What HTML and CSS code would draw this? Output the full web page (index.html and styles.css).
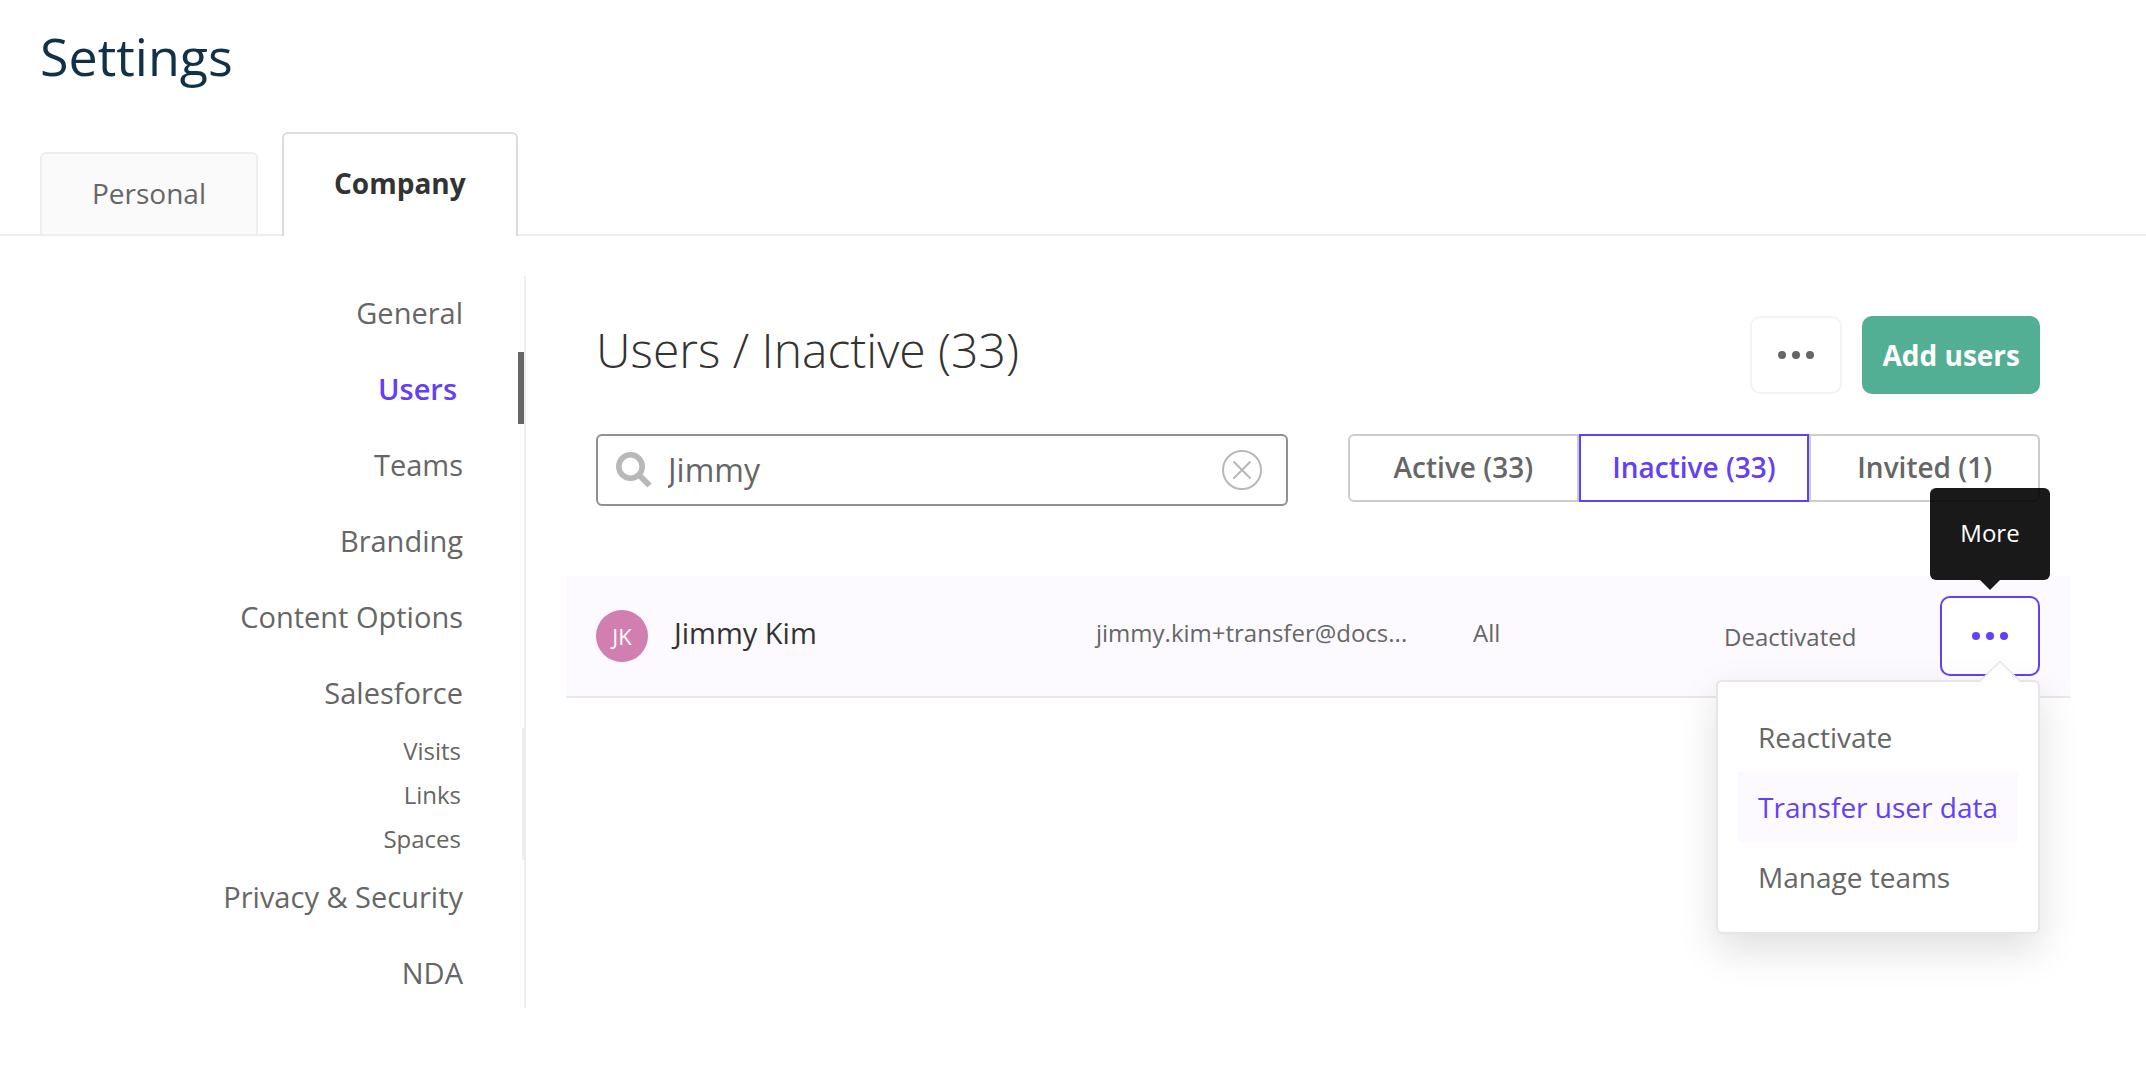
FILE: index.html
```html
<!DOCTYPE html>
<html lang="en">
<head>
    <meta charset="UTF-8">
    <meta name="viewport" content="width=device-width, initial-scale=1.0">
    <title>Settings</title>
    <link rel="stylesheet" href="styles.css">
</head>
<body>
    <header class="page-header">
        <h1>Settings</h1>
        <nav class="tabs">
            <a class="tab" href="#personal">Personal</a>
            <a class="tab active" href="#company">Company</a>
        </nav>
    </header>

    <div class="layout">
        <nav class="sidebar">
            <a class="side-link" href="#general">General</a>
            <a class="side-link active" href="#users">Users</a>
            <a class="side-link" href="#teams">Teams</a>
            <a class="side-link" href="#branding">Branding</a>
            <a class="side-link" href="#content">Content Options</a>
            <a class="side-link" href="#salesforce">Salesforce</a>
            <div class="sub-links">
                <a href="#visits">Visits</a>
                <a href="#links">Links</a>
                <a href="#spaces">Spaces</a>
            </div>
            <a class="side-link" href="#privacy">Privacy &amp; Security</a>
            <a class="side-link" href="#nda">NDA</a>
        </nav>

        <main>
            <div class="main-head">
                <h2>Users / Inactive (33)</h2>
                <button type="button" class="more-btn" aria-label="More options">
                    <svg width="36" height="8" viewBox="0 0 36 8"><circle cx="4" cy="4" r="4"/><circle cx="18" cy="4" r="4"/><circle cx="32" cy="4" r="4"/></svg>
                </button>
                <button type="button" class="add-btn">Add users</button>
            </div>

            <div class="filters">
                <div class="search">
                    <svg width="36" height="36" viewBox="0 0 36 36"><circle cx="14.5" cy="14.5" r="11.7" fill="none" stroke="#b8b8b8" stroke-width="5.6"/><path d="M23 23L33.5 33.5" stroke="#b8b8b8" stroke-width="6"/></svg>
                    <input type="text" value="Jimmy" aria-label="Search users">
                    <button type="button" class="clear-btn" aria-label="Clear search">
                        <svg width="40" height="40" viewBox="0 0 40 40"><circle cx="20" cy="20" r="19"/><path d="M12 12L28 28M28 12L12 28"/></svg>
                    </button>
                </div>
                <div class="segments">
                    <button type="button">Active (33)</button>
                    <button type="button" class="active">Inactive (33)</button>
                    <button type="button">Invited (1)</button>
                </div>
            </div>

            <table class="users">
                <tbody>
                    <tr>
                        <td class="col-name">
                            <div class="user">
                                <span class="avatar">JK</span>
                                <span class="name">Jimmy Kim</span>
                            </div>
                        </td>
                        <td class="col-email">jimmy.kim+transfer@docs...</td>
                        <td class="col-team">All</td>
                        <td class="col-status">Deactivated</td>
                        <td class="col-actions">
                            <div class="row-actions">
                                <button type="button" class="row-more" aria-label="More">
                                    <svg width="36" height="8" viewBox="0 0 36 8"><circle cx="4" cy="4" r="4"/><circle cx="18" cy="4" r="4"/><circle cx="32" cy="4" r="4"/></svg>
                                </button>
                                <div class="tooltip">More</div>
                                <div class="menu">
                                    <svg class="menu-arrow" width="44" height="22" viewBox="0 0 44 22"><path d="M2 21L22 1L42 21V22H2Z" fill="#fff"/><path d="M1 21L22 0.5L43 21" fill="none" stroke="#e6e6e6" stroke-width="1.5"/></svg>
                                    <button type="button">Reactivate</button>
                                    <button type="button" class="active">Transfer user data</button>
                                    <button type="button">Manage teams</button>
                                </div>
                            </div>
                        </td>
                    </tr>
                </tbody>
            </table>
        </main>
    </div>
</body>
</html>
```
FILE: styles.css
```css
* {
    box-sizing: border-box;
}
body {
    margin: 0;
    font-family: "Open Sans", sans-serif;
    font-size: 28px;
    color: #666;
    background-color: #fff;
}
a {
    color: inherit;
    text-decoration: none;
}
button, input {
    font-family: inherit;
    font-size: inherit;
    color: inherit;
}
button {
    padding: 0;
    border: none;
    background: none;
    cursor: pointer;
}
svg {
    display: block;
}
h1 {
    margin: 0 0 46px;
    font-size: 52px;
    font-weight: 400;
    line-height: 60px;
    color: #103148;
}
.page-header {
    padding: 26px 40px 0;
    border-bottom: 2px solid #eee;
}
.tabs {
    display: flex;
    align-items: flex-end;
    gap: 24px;
}
.tab {
    padding: 0 50px 2px;
    line-height: 78px;
    border: 2px solid #eee;
    border-bottom: none;
    border-radius: 6px 6px 0 0;
    background-color: #fafafa;
}
.tab.active {
    margin-bottom: -2px;
    padding-bottom: 4px;
    line-height: 98px;
    border-color: #ddd;
    background-color: #fff;
    font-weight: 700;
    color: #333;
}
.layout {
    display: flex;
    align-items: flex-start;
    padding: 40px 76px 64px 0;
}
.sidebar {
    flex: 0 0 526px;
    display: flex;
    flex-direction: column;
    gap: 4px;
    border-right: 2px solid #eee;
    text-align: right;
}
.side-link {
    padding: 2px 61px 0 0;
    font-size: 29px;
    line-height: 70px;
}
.side-link.active {
    border-right: 6px solid #666;
    font-weight: 600;
    color: #6440f5;
}
.sub-links {
    display: flex;
    flex-direction: column;
    margin: -4px 0;
    padding-right: 61px;
    border-right: 2px solid #eee;
    font-size: 24px;
    line-height: 42px;
}
.sub-links a {
    padding-top: 2px;
}
main {
    flex: 1;
    min-width: 0;
    margin-left: 40px;
    padding-top: 40px;
}
.main-head {
    display: flex;
    align-items: flex-start;
    gap: 20px;
    padding: 0 30px;
}
h2 {
    flex: 1;
    margin: 0;
    font-size: 48px;
    font-weight: 300;
    line-height: 68px;
    color: #333;
}
.more-btn, .row-more {
    display: flex;
    align-items: center;
    justify-content: center;
    border-radius: 10px;
    background-color: #fff;
}
.more-btn {
    width: 92px;
    height: 78px;
    border: 2px solid #f3f3f3;
    fill: #666;
}
.add-btn {
    height: 78px;
    padding: 0 20px;
    border-radius: 10px;
    background-color: #52af94;
    font-weight: 700;
    color: #fff;
}
.filters {
    display: grid;
    grid-template-columns: 1fr 1fr;
    align-items: start;
    gap: 60px;
    margin: 40px 0 70px;
    padding: 0 30px;
}
.search {
    display: flex;
    align-items: center;
    gap: 16px;
    height: 72px;
    padding: 0 24px 0 18px;
    border: 2px solid #8f8f95;
    border-radius: 6px;
}
.search input {
    flex: 1;
    min-width: 0;
    height: 64px;
    padding: 0 0 2px;
    border: none;
    outline: none;
    background: none;
    font-size: 32px;
}
.clear-btn svg {
    fill: none;
    stroke: #b8b8b8;
    stroke-width: 2;
    stroke-linecap: round;
}
.segments {
    display: flex;
}
.segments button {
    flex: 1;
    height: 68px;
    padding-bottom: 2px;
    border: 2px solid #ccc;
    font-weight: 600;
}
.segments button:first-child {
    border-radius: 6px 0 0 6px;
}
.segments button:last-child {
    border-radius: 0 6px 6px 0;
}
.segments button.active {
    border-color: #6440f5;
    color: #6440f5;
}
.users {
    width: 100%;
    table-layout: fixed;
    border-collapse: separate;
    border-spacing: 0;
}
.users td {
    height: 122px;
    padding: 0;
    border-bottom: 2px solid #e8e8e8;
    background-color: #fcfaff;
    font-size: 24px;
    vertical-align: middle;
}
.users .col-name {
    padding-left: 30px;
}
.users .col-email {
    width: 377px;
    padding-bottom: 8px;
}
.users .col-team {
    width: 251px;
    padding-bottom: 8px;
}
.users .col-status {
    width: 216px;
}
.users .col-actions {
    width: 130px;
    padding-right: 30px;
}
.user {
    display: flex;
    align-items: center;
    gap: 26px;
}
.avatar {
    width: 52px;
    border-radius: 50%;
    background-color: #d17eb1;
    font-size: 22px;
    line-height: 52px;
    text-align: center;
    color: #fff;
}
.name {
    padding-bottom: 8px;
    font-size: 29px;
    color: #333;
}
.row-actions {
    position: relative;
}
.row-more {
    width: 100px;
    height: 80px;
    border: 2px solid #6440f5;
    fill: #6440f5;
}
.tooltip {
    position: absolute;
    bottom: calc(100% + 16px);
    left: 50%;
    transform: translateX(-50%);
    width: 120px;
    padding-bottom: 2px;
    border-radius: 6px;
    background-color: rgba(0, 0, 0, 0.9);
    line-height: 90px;
    text-align: center;
    color: #fff;
}
.tooltip::after {
    content: "";
    position: absolute;
    top: 100%;
    left: 50%;
    margin-left: -10px;
    border: 10px solid transparent;
    border-top-color: rgba(0, 0, 0, 0.9);
    border-bottom: none;
}
.menu {
    position: absolute;
    top: calc(100% + 4px);
    right: 0;
    padding: 20px;
    border: 2px solid #e6e6e6;
    border-radius: 6px;
    background-color: #fff;
    box-shadow: 0 16px 40px rgba(0, 0, 0, 0.13);
    font-size: 28px;
}
.menu-arrow {
    position: absolute;
    right: 16px;
    bottom: 100%;
    margin-bottom: -1px;
}
.menu button {
    display: block;
    width: 100%;
    padding: 0 20px;
    line-height: 70px;
    text-align: left;
    white-space: nowrap;
}
.menu button.active {
    background-color: #fcfaff;
    color: #6440f5;
}
```
